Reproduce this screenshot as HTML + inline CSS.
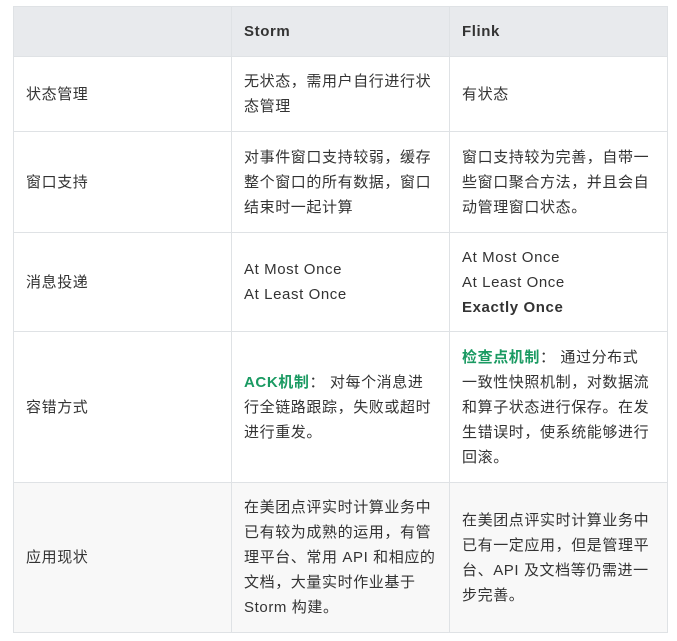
<!DOCTYPE html>
<html><head><meta charset="utf-8"><style>
body{margin:0;background:#fff;font-family:"Liberation Sans","Noto Sans CJK SC",sans-serif;color:#333;}
table{position:absolute;left:13px;top:6px;border-collapse:collapse;table-layout:fixed;width:654px;}
td,th{border:1px solid #dfe2e5;padding:0 12px;vertical-align:middle;font-size:15px;line-height:25px;letter-spacing:0.6px;white-space:nowrap;text-align:left;}
th{background:#e8eaed;font-weight:bold;height:49px;}
.g{color:#1a9a62;font-weight:bold;}
tr.s td{background:#f8f8f8;}
</style></head><body>
<table>
<colgroup><col style="width:218px"><col style="width:218px"><col style="width:218px"></colgroup>
<tr><th></th><th>Storm</th><th>Flink</th></tr>
<tr style="height:75px"><td>状态管理</td><td>无状态，需用户自行进行状<br>态管理</td><td>有状态</td></tr>
<tr style="height:101px"><td>窗口支持</td><td>对事件窗口支持较弱，缓存<br>整个窗口的所有数据，窗口<br>结束时一起计算</td><td>窗口支持较为完善，自带一<br>些窗口聚合方法，并且会自<br>动管理窗口状态。</td></tr>
<tr style="height:99px"><td>消息投递</td><td>At Most Once<br>At Least Once</td><td>At Most Once<br>At Least Once<br><b>Exactly Once</b></td></tr>
<tr style="height:151px"><td>容错方式</td><td><span class="g">ACK机制</span>： 对每个消息进<br>行全链路跟踪，失败或超时<br>进行重发。</td><td><span class="g">检查点机制</span>： 通过分布式<br>一致性快照机制，对数据流<br>和算子状态进行保存。在发<br>生错误时，使系统能够进行<br>回滚。</td></tr>
<tr class="s" style="height:150px"><td>应用现状</td><td>在美团点评实时计算业务中<br>已有较为成熟的运用，有管<br>理平台、常用 API 和相应的<br>文档，大量实时作业基于<br>Storm 构建。</td><td>在美团点评实时计算业务中<br>已有一定应用，但是管理平<br>台、API 及文档等仍需进一<br>步完善。</td></tr>
</table>
</body></html>
